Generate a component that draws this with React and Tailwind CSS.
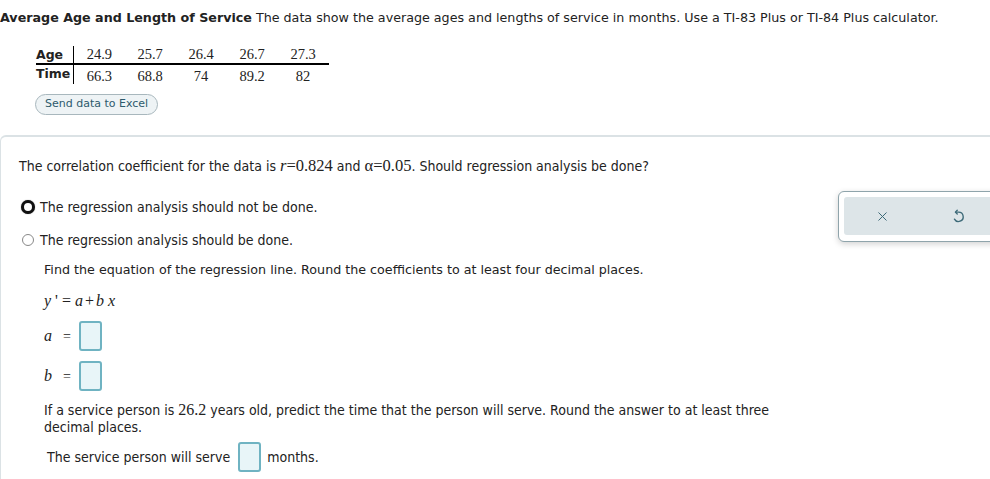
import { X } from 'lucide-react';

const sans = "font-['DejaVu_Sans',Verdana,sans-serif]";
const cond = "font-['DejaVu_Sans_Condensed','DejaVu_Sans',sans-serif]";
const serif = "font-['Liberation_Serif','Times_New_Roman',serif]";

const ages = ['24.9', '25.7', '26.4', '26.7', '27.3'];
const times = ['66.3', '68.8', '74', '89.2', '82'];

function Box() {
  return (
    <span className="inline-block w-[23px] h-[30px] rounded-[3px] border-2 border-[#6fb3c2] bg-[#e8f5f8]" />
  );
}

function ResetIcon() {
  return (
    <svg width="15" height="15" viewBox="0 0 24 24" fill="none" stroke="currentColor" strokeWidth="2.2" strokeLinecap="round" strokeLinejoin="round">
      <path d="M10 2 7 5l3 3" />
      <path d="M7.5 5H12a7.5 7.5 0 1 1-6.5 11.2" />
    </svg>
  );
}

export default function App() {
  return (
    <div className="relative w-[990px] h-[479px] bg-white text-[#222] overflow-hidden">
      {/* Problem header */}
      <div className={`pt-[10px] text-[12.7px] leading-[16px] whitespace-nowrap ${sans}`}>
        <b>Average Age and Length of Service</b> The data show the average ages and lengths of
        service in months. Use a TI-83 Plus or TI-84 Plus calculator.
      </div>

      <table className="ml-[36px] mt-[20px] border-collapse">
        <tbody>
          <tr className="border-b-2 border-black">
            <th className={`pr-[10px] text-left text-[12.5px] font-bold align-bottom leading-[16px] border-r border-black ${sans}`}>
              Age
            </th>
            {ages.map((v) => (
              <td key={v} className={`w-[51px] text-center text-[14.5px] leading-[16px] pb-[1px] ${serif}`}>
                {v}
              </td>
            ))}
          </tr>
          <tr>
            <th className={`pr-[1px] text-left text-[12.5px] font-bold align-top leading-[16px] pt-[1px] border-r border-black ${sans}`}>
              Time
            </th>
            {times.map((v) => (
              <td key={v} className={`w-[51px] text-center text-[14.5px] leading-[16px] pt-[3px] ${serif}`}>
                {v}
              </td>
            ))}
          </tr>
        </tbody>
      </table>

      <button
        className={`block ml-[35px] mt-[10px] h-[21px] px-[9px] rounded-full border border-[#a8b7bd] bg-[#eef3f5] text-[11px] text-[#2d5a6c] font-medium ${sans}`}
      >
        Send data to Excel
      </button>

      {/* Answer panel */}
      <div className="mt-[20px] border-t-2 border-l border-[#dbe2e5] rounded-tl-[6px] h-[400px]">
        <div className={`pt-[19px] pl-[18px] text-[14px] leading-[20px] whitespace-nowrap ${cond}`}>
          The correlation coefficient for the data is{' '}
          <span className={`text-[16.5px] leading-none italic ${serif}`}>r</span>
          <span className={`text-[16.5px] leading-none ${serif}`}>=0.824</span> and{' '}
          <span className={`text-[16.5px] leading-none ${serif}`}>α=0.05</span>. Should regression analysis be done?
        </div>

        <div className={`mt-[21px] ml-[20px] flex items-center gap-[5px] text-[14px] leading-[20px] ${cond}`}>
          <span className="w-[14px] h-[14px] rounded-full border-[3px] border-[#111] bg-white shadow-[0_0_1px_#666]" />
          The regression analysis should not be done.
        </div>
        <div className={`mt-[13px] ml-[21px] flex items-center gap-[6px] text-[14px] leading-[20px] ${cond}`}>
          <span className="w-[12px] h-[12px] rounded-full border border-[#888] bg-white" />
          The regression analysis should be done.
        </div>

        <div className="ml-[43px]">
          <div className={`mt-[10px] text-[12.7px] leading-[20px] ${sans}`}>
            Find the equation of the regression line. Round the coefficients to at least four decimal places.
          </div>
          <div className={`mt-[11px] text-[16px] leading-[20px] ${serif}`}>
            <i>y</i> ' = <i>a</i>
            <span className="mx-[2px]">+</span>
            <i>b</i> <i>x</i>
          </div>
          <div className={`mt-[10px] flex items-center h-[30px] text-[16px] ${serif}`}>
            <i className="w-[19px]">a</i>
            <span className="w-[16px] text-[14px]">=</span>
            <Box />
          </div>
          <div className={`mt-[10px] flex items-center h-[30px] text-[16px] ${serif}`}>
            <i className="w-[19px]">b</i>
            <span className="w-[16px] text-[14px]">=</span>
            <Box />
          </div>
          <div className={`mt-[11px] w-[745px] text-[14px] leading-[17px] ${cond}`}>
            If a service person is <span className={`text-[16px] leading-none ${serif}`}>26.2</span> years old,
            predict the time that the person will serve. Round the answer to at least three decimal places.
          </div>
          <div className={`mt-[6px] ml-[3px] flex items-center text-[14px] ${cond}`}>
            The service person will serve
            <span className="ml-[8px] mr-[6px] flex">
              <Box />
            </span>
            months.
          </div>
        </div>
      </div>

      {/* Floating toolbox */}
      <div className="absolute left-[838px] top-[191px] w-[170px] h-[51px] rounded-[6px] border border-[#8fa4ab] bg-white shadow-[0_2px_6px_rgba(0,0,0,0.18)] p-[5px]">
        <div className="h-[38px] bg-[#dde5e8] rounded-[3px] flex items-center text-[#3d6a78]">
          <X className="ml-[31px] w-[15px] h-[15px]" strokeWidth={1.6} />
          <span className="ml-[61px]">
            <ResetIcon />
          </span>
        </div>
      </div>
    </div>
  );
}
